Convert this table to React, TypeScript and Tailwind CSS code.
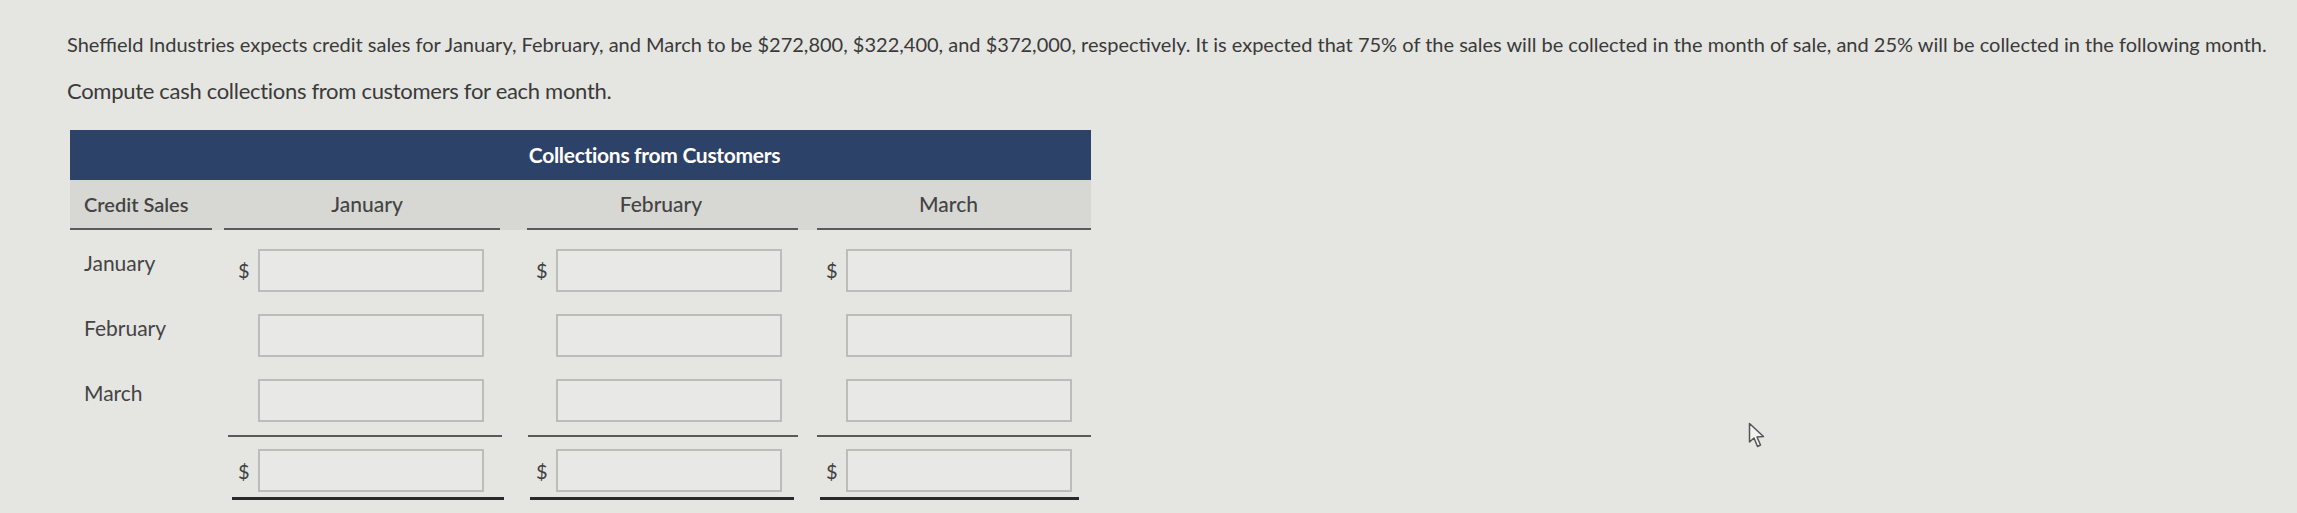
import React from 'react';

const months = ['January', 'February', 'March'];

const MoneyInput = ({ dollar }: { dollar: boolean }) => (
  <div className="flex items-center pl-[20px]">
    <span className="w-[20px] text-[20px] text-[#404040]">{dollar ? '$' : ''}</span>
    <div className="h-[43px] w-[226px] border-2 border-[#bcbcb9] bg-[#e8e8e6]" />
  </div>
);

const Cursor = () => (
  <svg
    className="absolute left-[1748px] top-[422px]"
    width="18"
    height="27"
    viewBox="0 0 18 27"
    fill="none"
  >
    <path
      d="M1.5 1.5 L1.5 20 L6 16 L9.5 24.5 L12.5 23 L9 15 L15.5 14.5 Z"
      fill="#f2f2f0"
      stroke="#555"
      strokeWidth="1.5"
      strokeLinejoin="round"
    />
  </svg>
);

export default function App() {
  return (
    <div
      className="relative h-[513px] w-[2297px] overflow-hidden bg-[#e5e5e2] text-[#3a3a3a]"
      style={{ fontFamily: 'Lato, "Open Sans", sans-serif' }}
    >
      <div className="pl-[67px] pt-[30px]">
        <p className="whitespace-nowrap text-[20px] leading-[28px]">
          Sheffield Industries expects credit sales for January, February, and March to be $272,800, $322,400, and
          $372,000, respectively. It is expected that 75% of the sales will be collected in the month of sale, and 25%
          will be collected in the following month.
        </p>
        <p className="mt-[18px] text-[22px] leading-[30px] tracking-[-0.3px]">
          Compute cash collections from customers for each month.
        </p>
      </div>

      <div className="ml-[70px] mt-[24px] w-[1021px]">
        {/* header band */}
        <div className="grid h-[50px] grid-cols-[148px_873px] items-center bg-[#2d4269]">
          <div />
          <div className="text-center text-[21px] font-bold tracking-[-0.3px] text-white">
            Collections from Customers
          </div>
        </div>

        {/* sub header */}
        <div className="grid h-[50px] grid-cols-[148px_298px_290px_285px] bg-[#d7d7d3]">
          <div className="flex flex-col justify-between">
            <div className="flex flex-1 items-center pl-[14px] text-[20px] font-semibold text-[#444]">
              Credit Sales
            </div>
            <div className="mr-[6px] h-[2px] bg-[#5a5a5a]" />
          </div>
          {months.map((m, i) => (
            <div key={m} className="flex flex-col">
              <div className="flex flex-1 items-center justify-center text-[21px] font-medium text-[#444]">
                {m}
              </div>
              <div
                className={`h-[2px] bg-[#5a5a5a] ${
                  i === 0 ? 'ml-[6px] mr-[16px]' : i === 1 ? 'ml-[11px] mr-[8px]' : 'ml-[11px]'
                }`}
              />
            </div>
          ))}
        </div>

        {/* rows */}
        {months.map((m, r) => (
          <div key={m} className="grid h-[65px] grid-cols-[148px_298px_290px_285px] pt-[15px]">
            <div className="pl-[14px] pt-[2px] text-[21px] text-[#444]">{m}</div>
            {months.map((c) => (
              <MoneyInput key={c} dollar={r === 0} />
            ))}
          </div>
        ))}

        {/* total line */}
        <div className="grid grid-cols-[148px_298px_290px_285px] pt-[10px]">
          <div />
          <div className="ml-[10px] mr-[14px] h-[2px] bg-[#5a5a5a]" />
          <div className="ml-[12px] mr-[8px] h-[2px] bg-[#5a5a5a]" />
          <div className="ml-[11px] h-[2px] bg-[#5a5a5a]" />
        </div>

        <div className="grid grid-cols-[148px_298px_290px_285px] pt-[12px]">
          <div />
          {months.map((c) => (
            <div key={c} className="flex flex-col">
              <MoneyInput dollar />
              <div className="ml-[14px] mr-[12px] mt-[5px] h-[3px] bg-[#2a2a2a]" />
            </div>
          ))}
        </div>
      </div>

      <Cursor />
    </div>
  );
}
